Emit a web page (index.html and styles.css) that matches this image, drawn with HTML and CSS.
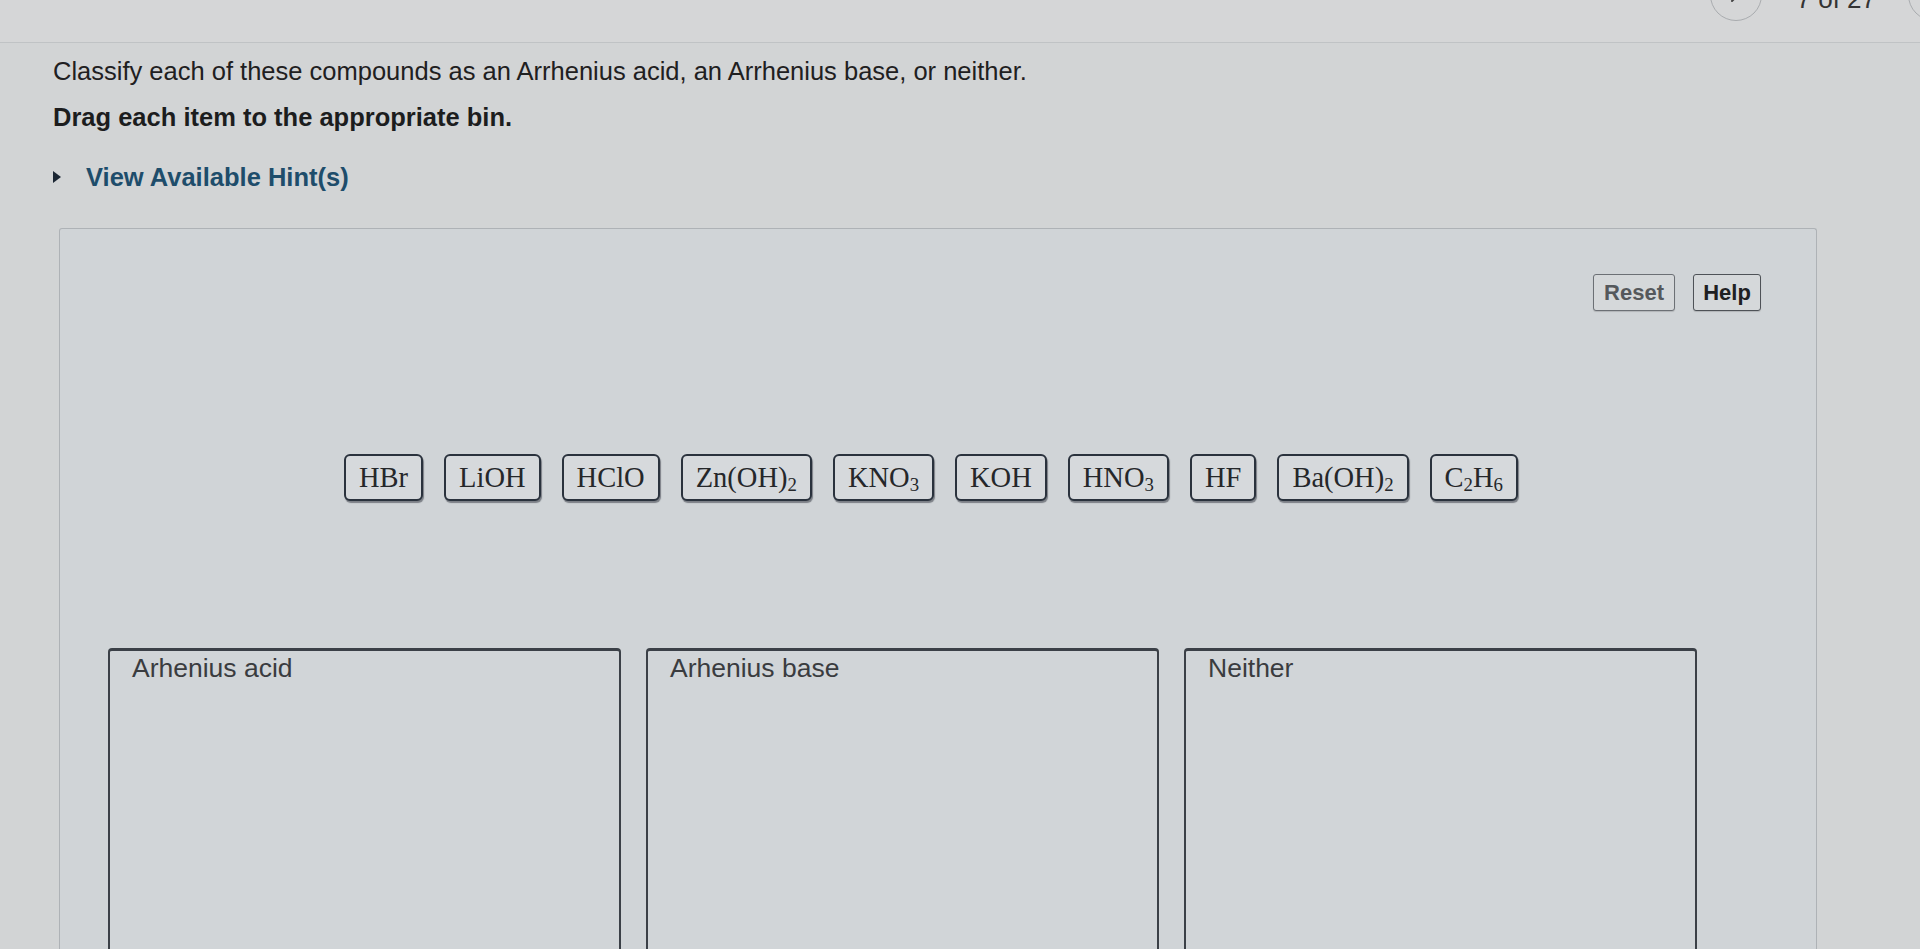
FILE: index.html
```html
<!DOCTYPE html>
<html lang="en">
<head>
<meta charset="utf-8">
<title>Arrhenius classification</title>
<link rel="stylesheet" href="styles.css">
</head>
<body>
<header class="topbar">
  <span class="nav-circle"><svg width="20" height="20" viewBox="0 0 20 20"><path d="M13 2 L6 9" stroke="#444" stroke-width="2" fill="none" stroke-linecap="round"/></svg></span>
  <span class="counter">7 of 27</span>
  <span class="nav-circle nav-next"></span>
</header>
<main class="content">
  <p class="question">Classify each of these compounds as an Arrhenius acid, an Arrhenius base, or neither.</p>
  <p class="instruction">Drag each item to the appropriate bin.</p>
  <p class="hint"><span class="hint-arrow"></span>View Available Hint(s)</p>

  <section class="panel">
    <div class="tools">
      <button class="btn btn-reset">Reset</button>
      <button class="btn btn-help">Help</button>
    </div>
    <div class="tokens">
      <span class="token">HBr</span>
      <span class="token">LiOH</span>
      <span class="token">HClO</span>
      <span class="token">Zn(OH)<sub>2</sub></span>
      <span class="token">KNO<sub>3</sub></span>
      <span class="token">KOH</span>
      <span class="token">HNO<sub>3</sub></span>
      <span class="token">HF</span>
      <span class="token">Ba(OH)<sub>2</sub></span>
      <span class="token">C<sub>2</sub>H<sub>6</sub></span>
    </div>
    <div class="bins">
      <div class="bin"><span class="bin-label">Arhenius acid</span></div>
      <div class="bin"><span class="bin-label">Arhenius base</span></div>
      <div class="bin"><span class="bin-label">Neither</span></div>
    </div>
  </section>
</main>
</body>
</html>
```

FILE: styles.css
```css
html, body {
  margin: 0;
  padding: 0;
  height: 100%;
  overflow: hidden;
}
body {
  background: #d2d4d5;
  font-family: "Liberation Sans", Arial, sans-serif;
  color: #1e1f20;
}
.topbar {
  height: 42px;
  border-bottom: 1px solid #c0c3c5;
  background: #d5d6d7;
  display: flex;
  justify-content: flex-end;
  align-items: flex-end;
  overflow: hidden;
}
.nav-circle {
  width: 50px;
  height: 50px;
  border: 1.5px solid #a9acaf;
  border-radius: 50%;
  margin-bottom: 21px;
  display: flex;
  justify-content: center;
  align-items: flex-end;
  flex-shrink: 0;
}
.nav-circle svg {
  margin-bottom: 8px;
}
.counter {
  font-size: 26px;
  line-height: 26px;
  color: #333;
  margin: 0 32px 30px 34px;
  white-space: nowrap;
}
.nav-next {
  margin-right: -40px;
}
.content {
  padding-left: 53px;
}
.question {
  margin: 13px 0 0;
  font-size: 25.5px;
  line-height: 30px;
  color: #1f2021;
}
.instruction {
  margin: 16px 0 0;
  font-size: 25.5px;
  line-height: 30px;
  font-weight: bold;
  color: #1c1d1e;
}
.hint {
  margin: 30px 0 0;
  font-size: 25.5px;
  line-height: 30px;
  font-weight: bold;
  color: #1e4d6b;
  display: flex;
  align-items: center;
}
.hint-arrow {
  width: 0;
  height: 0;
  border-top: 6px solid transparent;
  border-bottom: 6px solid transparent;
  border-left: 8px solid #1b2633;
  margin-right: 25px;
}
.panel {
  margin: 36px 103px 0 6px;
  border: 1px solid #aeb2b6;
  border-bottom: none;
  border-radius: 3px 3px 0 0;
  background: #d0d4d7;
  height: 760px;
  padding: 45px 0 0;
}
.tools {
  display: flex;
  justify-content: flex-end;
  gap: 18px;
  padding-right: 55px;
}
.btn {
  font-family: "Liberation Sans", Arial, sans-serif;
  font-size: 22px;
  font-weight: bold;
  height: 37px;
  padding: 0 6px;
  background: #d5d8da;
  border: 1.5px solid #6c7075;
  border-radius: 3px;
  box-shadow: 0 1px 1px rgba(0,0,0,0.15);
}
.btn-reset {
  color: #55585c;
  width: 82px;
}
.btn-help {
  color: #1f2022;
  width: 68px;
  border-color: #4e5257;
}
.tokens {
  display: flex;
  justify-content: center;
  gap: 21px;
  margin-top: 143px;
  padding-right: 14px;
}
.token {
  font-family: "Liberation Serif", "Times New Roman", serif;
  font-size: 28.5px;
  line-height: 43px;
  height: 43px;
  padding: 0 13px;
  color: #25272a;
  background: #d6d9dc;
  border: 2px solid #2a323d;
  border-radius: 6px;
  box-shadow: 1px 2px 1px rgba(20,25,35,0.45);
  white-space: nowrap;
}
.token sub {
  font-size: 0.66em;
  vertical-align: -0.22em;
  line-height: 0;
}
.bins {
  display: grid;
  grid-template-columns: repeat(3, 1fr);
  gap: 25px;
  margin-top: 147px;
  padding: 0 119px 0 48px;
}
.bin {
  height: 400px;
  border: 2px solid #3b4047;
  border-top-width: 3px;
  border-bottom: none;
  border-radius: 4px 4px 0 0;
  background: #d1d5d8;
  padding: 2px 22px 0;
}
.bin-label {
  font-size: 26.5px;
  line-height: 30px;
  color: #3a3c3f;
}
```
